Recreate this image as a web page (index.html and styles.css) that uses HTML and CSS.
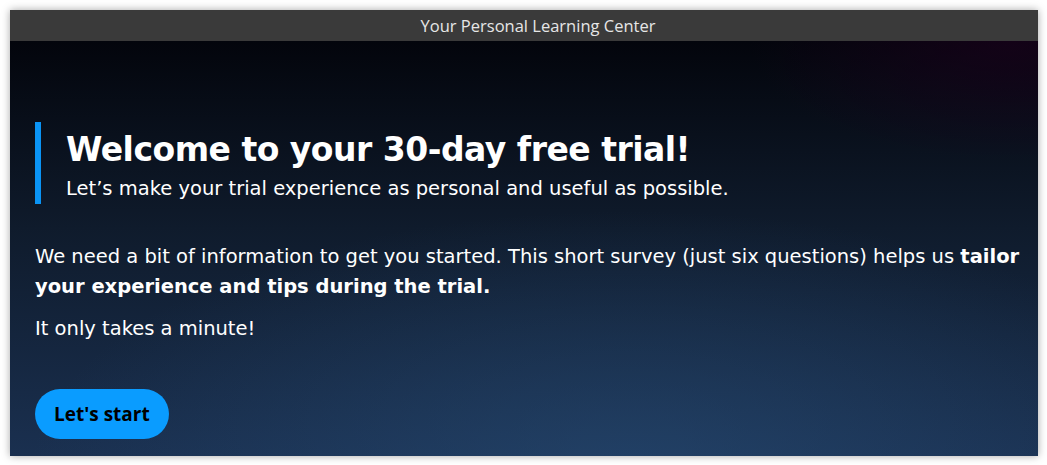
FILE: index.html
```html
<!DOCTYPE html>
<html lang="en">
<head>
<meta charset="utf-8">
<title>Your Personal Learning Center</title>
<link rel="stylesheet" href="styles.css">
</head>
<body>
<div class="window">
  <header class="titlebar">Your Personal Learning Center</header>
  <main class="content">
    <section class="intro">
      <h1 class="intro-title">Welcome to your 30-day free trial!</h1>
      <p class="intro-sub">Let’s make your trial experience as personal and useful as possible.</p>
    </section>
    <p class="text">We need a bit of information to get you started. This short survey (just six questions) helps us <strong>tailor your experience and tips during the trial.</strong></p>
    <p class="text text-last">It only takes a minute!</p>
    <div class="actions">
      <button class="start-btn" type="button">Let's start</button>
    </div>
  </main>
</div>
</body>
</html>
```

FILE: styles.css
```css
html, body {
  margin: 0;
  padding: 0;
  background: #ffffff;
}
body {
  padding: 10px 9px 9px 10px;
  height: 465px;
  box-sizing: border-box;
}
.window {
  display: flex;
  flex-direction: column;
  height: 446px;
  box-shadow: 0 0 8px rgba(0, 0, 0, 0.35);
}
.titlebar {
  height: 31px;
  flex: none;
  background: #3a3a3a;
  color: #e6e6e6;
  font-family: "Open Sans", "Noto Sans", sans-serif;
  font-size: 16.5px;
  display: flex;
  align-items: center;
  justify-content: center;
  padding-left: 28px;
}
.content {
  flex: 1;
  padding: 81px 10px 0 25px;
  color: #ffffff;
  font-family: "DejaVu Sans", sans-serif;
  background:
    radial-gradient(ellipse 600px 260px at 620px 430px, rgba(40, 78, 120, 0.55), rgba(40, 78, 120, 0) 100%),
    radial-gradient(ellipse 260px 120px at 1000px 0px, rgba(30, 0, 30, 0.6), rgba(30, 0, 30, 0) 100%),
    linear-gradient(180deg, #03050c 0%, #0f1b2c 45%, #1a3050 100%);
}
.intro {
  border-left: 6px solid #0a94f5;
  padding: 5px 0 0 25px;
  margin-bottom: 38px;
}
.intro-title {
  margin: 0;
  font-size: 33px;
  font-weight: 700;
  line-height: 46px;
  letter-spacing: -0.5px;
}
.intro-sub {
  margin: 0;
  font-size: 19.5px;
  line-height: 31px;
}
.text {
  margin: 0 0 12px;
  font-size: 19.5px;
  line-height: 30px;
}
.text-last {
  margin-bottom: 0;
}
.text strong {
  font-weight: 700;
}
.actions {
  margin-top: 45px;
}
.start-btn {
  height: 50px;
  padding: 0 19px;
  border: none;
  border-radius: 25px;
  background: #0a9cff;
  color: #000000;
  font-family: "Open Sans", "Noto Sans", sans-serif;
  font-weight: 700;
  font-size: 19px;
}
```
